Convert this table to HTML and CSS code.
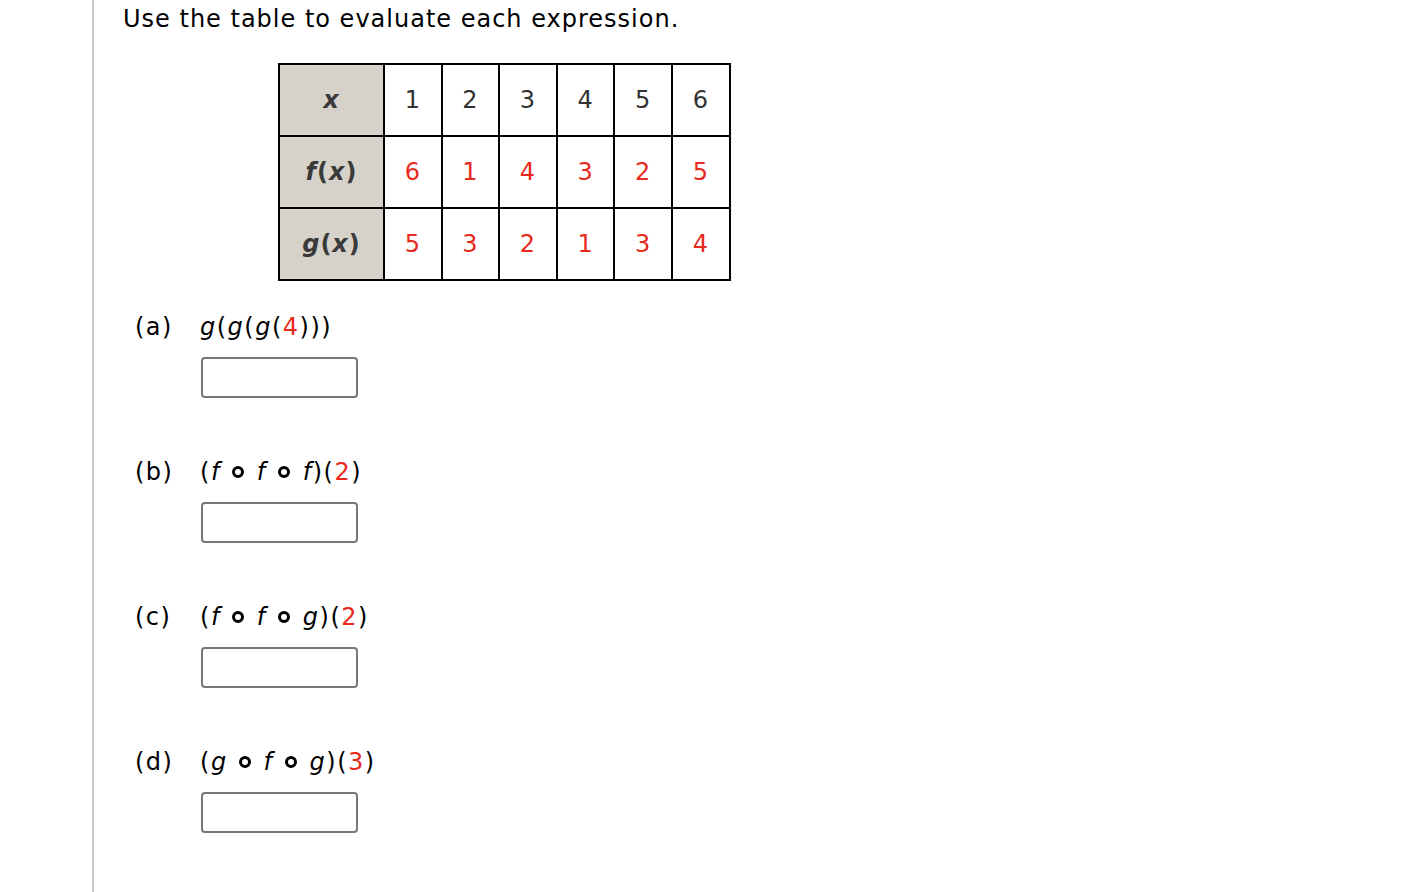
FILE: index.html
```html
<!DOCTYPE html>
<html>
<head>
<meta charset="utf-8">
<link rel="stylesheet" href="styles.css">
</head>
<body>
<div class="page">
  <p class="prompt">Use the table to evaluate each expression.</p>
  <table class="values">
    <tr>
      <th><i>x</i></th>
      <td>1</td><td>2</td><td>3</td><td>4</td><td>5</td><td>6</td>
    </tr>
    <tr class="red">
      <th><i>f</i>(<i>x</i>)</th>
      <td>6</td><td>1</td><td>4</td><td>3</td><td>2</td><td>5</td>
    </tr>
    <tr class="red">
      <th><i>g</i>(<i>x</i>)</th>
      <td>5</td><td>3</td><td>2</td><td>1</td><td>3</td><td>4</td>
    </tr>
  </table>

  <div class="part">
    <div class="line"><span class="lbl">(a)</span><span class="expr"><i>g</i>(<i>g</i>(<i>g</i>(<span class="num">4</span>)))</span></div>
    <input class="answer" type="text">
  </div>
  <div class="part">
    <div class="line"><span class="lbl">(b)</span><span class="expr">(<i>f</i><span class="op"></span><i>f</i><span class="op"></span><i>f</i>)(<span class="num">2</span>)</span></div>
    <input class="answer" type="text">
  </div>
  <div class="part">
    <div class="line"><span class="lbl">(c)</span><span class="expr">(<i>f</i><span class="op"></span><i>f</i><span class="op"></span><i>g</i>)(<span class="num">2</span>)</span></div>
    <input class="answer" type="text">
  </div>
  <div class="part">
    <div class="line"><span class="lbl">(d)</span><span class="expr">(<i>g</i><span class="op"></span><i>f</i><span class="op"></span><i>g</i>)(<span class="num">3</span>)</span></div>
    <input class="answer" type="text">
  </div>
</div>
</body>
</html>
```

FILE: styles.css
```css
html, body {
  margin: 0;
  padding: 0;
  background: #fff;
}
body {
  font-family: "DejaVu Sans", Verdana, sans-serif;
  color: #000;
}
.page {
  margin-left: 92px;
  border-left: 2px solid #cccccc;
  min-height: 892px;
  padding-left: 29px;
  box-sizing: border-box;
}
.prompt {
  margin: 0;
  padding-top: 4px;
  font-size: 24px;
  line-height: 30px;
  letter-spacing: 1px;
}
.values {
  border-collapse: collapse;
  margin: 29px 0 0 155px;
  font-size: 24px;
  letter-spacing: 1px;
}
.values th,
.values td {
  border: 2px solid #000;
  height: 70px;
  padding: 0;
  text-align: center;
}
.values th {
  width: 103px;
  background: #d6d2ca;
  color: #3a3a3a;
  font-weight: bold;
}
.values td {
  width: 55.6px;
  color: #333;
}
.values tr.red td {
  color: #e8291c;
}
.part {
  margin-left: 12px;
}
.part:first-of-type {
  margin-top: 30px;
}
.line {
  display: flex;
  font-size: 24px;
  line-height: 32px;
  letter-spacing: 1.5px;
}
.lbl {
  width: 65px;
}
.num {
  color: #e8291c;
}
.op {
  display: inline-block;
  width: 12px;
  height: 12px;
  box-sizing: border-box;
  border: 3px solid #000;
  border-radius: 50%;
  margin: 0 13px 0 11px;
  vertical-align: 2px;
}
.answer {
  display: block;
  margin: 14px 0 0 66px;
  width: 157px;
  height: 41px;
  box-sizing: border-box;
  border: 2px solid #777;
  border-radius: 4px;
  padding: 0;
  background: #fff;
}
.part + .part {
  margin-top: 58px;
}
```
